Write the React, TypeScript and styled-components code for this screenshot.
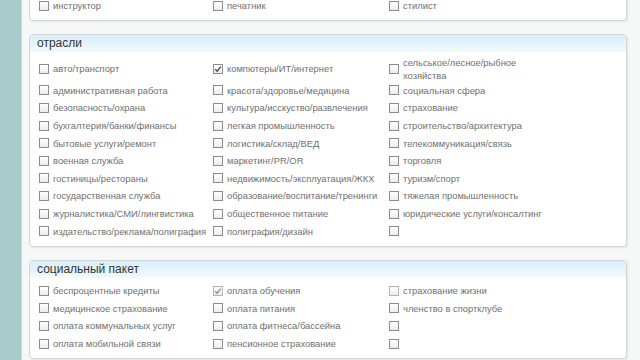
import { Fragment } from "react";
import styled, { createGlobalStyle } from "styled-components";

const GlobalStyle = createGlobalStyle`
  html, body {
    margin: 0;
    padding: 0;
    background: #ffffff;
    font-family: "Liberation Sans", Arial, sans-serif;
  }
  #root {
    height: 100vh;
    overflow: hidden;
  }
`;

const Layout = styled.div`
  display: flex;
  height: 100vh;
`;

const Strip = styled.div`
  width: 21px;
  flex: none;
  background: #a9caca;
  border-right: 1px solid #c4dcdc;
`;

const Main = styled.div`
  flex: 1;
  display: flex;
  flex-direction: column;
  gap: 13px;
  padding: 0 13px 0 7px;
  margin-top: -3px;
  background: #f6f7f7;
`;

const Panel = styled.section<{ $clipped?: boolean }>`
  background: #ffffff;
  border: 1px solid #d3d6d6;
  border-radius: 4px;
  box-shadow: 1px 1px 2px rgba(0, 0, 0, 0.08);
  padding: 0 0 6px 9px;
  ${(p) => p.$clipped && `border-top: none; border-top-left-radius: 0; border-top-right-radius: 0; padding-bottom: 5px;`}
`;

const Header = styled.h3`
  margin: 0 0 4px -9px;
  padding: 0 7px;
  height: 17px;
  line-height: 17px;
  font-size: 12px;
  font-weight: normal;
  color: #333;
  border-radius: 3px 3px 0 0;
  background: linear-gradient(#d8eef8, #f2fafd);
`;

const Grid = styled.div`
  display: grid;
  grid-template-columns: 174px 176px 1fr;
`;

const Item = styled.label<{ $tall?: boolean }>`
  display: flex;
  align-items: center;
  gap: 4px;
  min-height: ${(p) => (p.$tall ? "25px" : "17.6px")};
  font-size: 9.4px;
  line-height: 13px;
  color: #707070;
  white-space: ${(p) => (p.$tall ? "pre-line" : "nowrap")};
`;

const Box = styled.span<{ $faint?: boolean }>`
  flex: none;
  width: 8px;
  height: 8px;
  border: 1px solid ${(p) => (p.$faint ? "#b4b4b4" : "#8c8c8c")};
  background: linear-gradient(#ffffff, #ececec);
  display: flex;
  align-items: center;
  justify-content: center;
`;

type Opt = { t: string; on?: boolean; faint?: boolean };

function Check({ o }: { o: Opt }) {
  return (
    <Item $tall={o.t.includes("\n")}>
      <Box $faint={o.faint}>
        {o.on && (
          <svg width="8" height="8" viewBox="0 0 8 8">
            <path d="M1.2 4.2 L3.2 6.2 L6.8 1.6" fill="none" stroke={o.faint ? "#8a8a8a" : "#3c4a3c"} strokeWidth="1.3" />
          </svg>
        )}
      </Box>
      {o.t}
    </Item>
  );
}

const top: Opt[] = [{ t: "инструктор" }, { t: "печатник" }, { t: "стилист" }];

const branches: Opt[] = [
  { t: "авто/транспорт" }, { t: "компютеры/ИТ/интернет", on: true }, { t: "сельськое/лесное/рыбное\nхозяйства" },
  { t: "административная работа" }, { t: "красота/здоровье/медицина" }, { t: "социальная сфера" },
  { t: "безопасность/охрана" }, { t: "культура/исскуство/развлечения" }, { t: "страхование" },
  { t: "бухгалтерия/банки/финансы" }, { t: "легкая промышленность" }, { t: "строительство/архитектура" },
  { t: "бытовые услуги/ремонт" }, { t: "логистика/склад/ВЕД" }, { t: "телекоммуникация/связь" },
  { t: "военная служба" }, { t: "маркетинг/PR/OR" }, { t: "торговля" },
  { t: "гостиницы/рестораны" }, { t: "недвижимость/эксплуатация/ЖКХ" }, { t: "туризм/спорт" },
  { t: "государственная служба" }, { t: "образование/воспитание/тренинги" }, { t: "тяжелая промышленность" },
  { t: "журналистика/СМИ/лингвистика" }, { t: "общественное питание" }, { t: "юридические услуги/консалтинг" },
  { t: "издательство/реклама/полиграфия" }, { t: "полиграфия/дизайн" }, { t: "" },
];

const social: Opt[] = [
  { t: "беспроцентные кредиты" }, { t: "оплата обучения", on: true, faint: true }, { t: "страхование жизни", faint: true },
  { t: "медицинское страхование" }, { t: "оплата питания" }, { t: "членство в спортклубе" },
  { t: "оплата коммунальных услуг" }, { t: "оплата фитнеса/бассейна" }, { t: "" },
  { t: "оплата мобильной связи" }, { t: "пенсионное страхование" }, { t: "" },
];

function Options({ list }: { list: Opt[] }) {
  return (
    <Grid>
      {list.map((o, i) => (
        <Fragment key={i}>
          <Check o={o} />
        </Fragment>
      ))}
    </Grid>
  );
}

export default function App() {
  return (
    <>
      <GlobalStyle />
      <Layout>
        <Strip />
        <Main>
          <Panel $clipped>
            <Options list={top} />
          </Panel>
          <Panel>
            <Header>отрасли</Header>
            <Options list={branches} />
          </Panel>
          <Panel>
            <Header>социальный пакет</Header>
            <Options list={social} />
          </Panel>
        </Main>
      </Layout>
    </>
  );
}
